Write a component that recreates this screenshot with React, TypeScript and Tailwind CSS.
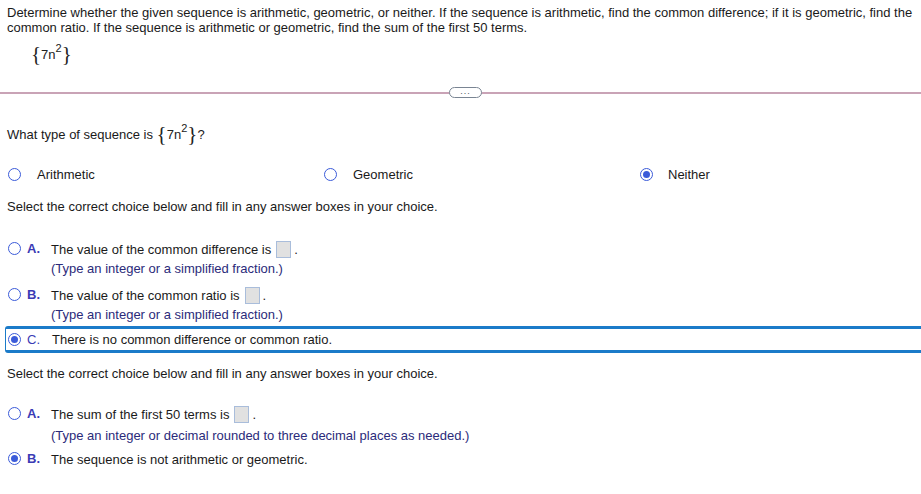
import React from "react";

function Radio({ checked }: { checked?: boolean }) {
  return (
    <span className="inline-flex h-[13px] w-[13px] shrink-0 items-center justify-center rounded-full border border-[#3b5bd9] bg-white">
      {checked && <span className="h-[7px] w-[7px] rounded-full bg-[#3b5bd9]" />}
    </span>
  );
}

function Seq() {
  return (
    <span className="inline-flex items-center text-[#222]">
      <span className="text-[21px] leading-none font-['Liberation_Serif',serif]">{"{"}</span>
      <span>7n</span>
      <span className="relative -top-[6px] text-[11px]">2</span>
      <span className="text-[21px] leading-none font-['Liberation_Serif',serif]">{"}"}</span>
    </span>
  );
}

function Box() {
  return <span className="ml-[5px] mr-[3px] inline-block h-[17px] w-[15px] border border-[#a9bddb] bg-[#e1e1e1] align-middle" />;
}

function Choice({
  letter,
  checked,
  children,
  hint,
  hintClass = "mt-[3px]",
}: {
  letter: string;
  checked?: boolean;
  children: React.ReactNode;
  hint?: string;
  hintClass?: string;
}) {
  return (
    <div className="flex items-start">
      <div className="flex w-[44px] items-center gap-[6px] pl-[1px] pt-[1px]">
        <Radio checked={checked} />
        <span className="font-bold text-[#3b3bb5]">{letter}.</span>
      </div>
      <div className="flex flex-col">
        <div className="flex h-[18px] items-center whitespace-pre">{children}</div>
        {hint && <div className={`${hintClass} text-[#2b2b7a]`}>{hint}</div>}
      </div>
    </div>
  );
}

export default function App() {
  return (
    <div className="h-[494px] w-[921px] overflow-hidden bg-white font-['Liberation_Sans',Arial,sans-serif] text-[13px] leading-[15px] text-[#1a1a1a]">
      <div className="px-[7px] pt-[5px]">
        <p>
          Determine whether the given sequence is arithmetic, geometric, or neither. If the sequence is arithmetic, find the common difference; if it is geometric, find the
          common ratio. If the sequence is arithmetic or geometric, find the sum of the first 50 terms.
        </p>
        <div className="mt-[9px] pl-[24px]">
          <Seq />
        </div>
      </div>

      <div className="relative mt-[27px] h-[2px] bg-[#c9a3b6]">
        <div className="absolute left-[449px] top-[-5px] flex h-[11px] w-[33px] items-center justify-center rounded-full border border-[#7a8593] bg-white text-[9px] leading-none text-[#4a5563]">
          <span className="-mt-[3px] tracking-[1px]">...</span>
        </div>
      </div>

      <div className="px-[7px]">
        <div className="mt-[30px] flex items-center">
          <span>What type of sequence is&nbsp;</span>
          <Seq />
          <span>?</span>
        </div>

        <div className="mt-[22px] grid grid-cols-[316px_316px_1fr]">
          <div className="flex items-center gap-[16px] pl-[1px]">
            <Radio />
            <span>Arithmetic</span>
          </div>
          <div className="flex items-center gap-[16px] pl-[1px]">
            <Radio />
            <span>Geometric</span>
          </div>
          <div className="flex items-center gap-[15px] pl-[1px]">
            <Radio checked />
            <span>Neither</span>
          </div>
        </div>

        <p className="mt-[17px]">Select the correct choice below and fill in any answer boxes in your choice.</p>

        <div className="mt-[26px] flex flex-col gap-[10px]">
          <Choice letter="A" hint="(Type an integer or a simplified fraction.)">
            The value of the common difference is<Box />.
          </Choice>
          <Choice letter="B" hint="(Type an integer or a simplified fraction.)">
            The value of the common ratio is<Box />.
          </Choice>
        </div>
      </div>

      <div className="mt-[4px] ml-[5px] flex h-[27px] items-center rounded-l-[3px] border-y-[3px] border-l border-[#1b7bc9] pl-[2px]">
        <div className="flex w-[44px] items-center gap-[6px]">
          <Radio checked />
          <span className="text-[#3b3bb5]">C.</span>
        </div>
        <span>There is no common difference or common ratio.</span>
      </div>

      <div className="px-[7px]">
        <p className="mt-[13px]">Select the correct choice below and fill in any answer boxes in your choice.</p>

        <div className="mt-[24px] flex flex-col gap-[7px]">
          <Choice letter="A" hint="(Type an integer or decimal rounded to three decimal places as needed.)" hintClass="mt-[5px]">
            The sum of the first 50 terms is<Box />.
          </Choice>
          <Choice letter="B" checked>
            The sequence is not arithmetic or geometric.
          </Choice>
        </div>
      </div>
    </div>
  );
}
